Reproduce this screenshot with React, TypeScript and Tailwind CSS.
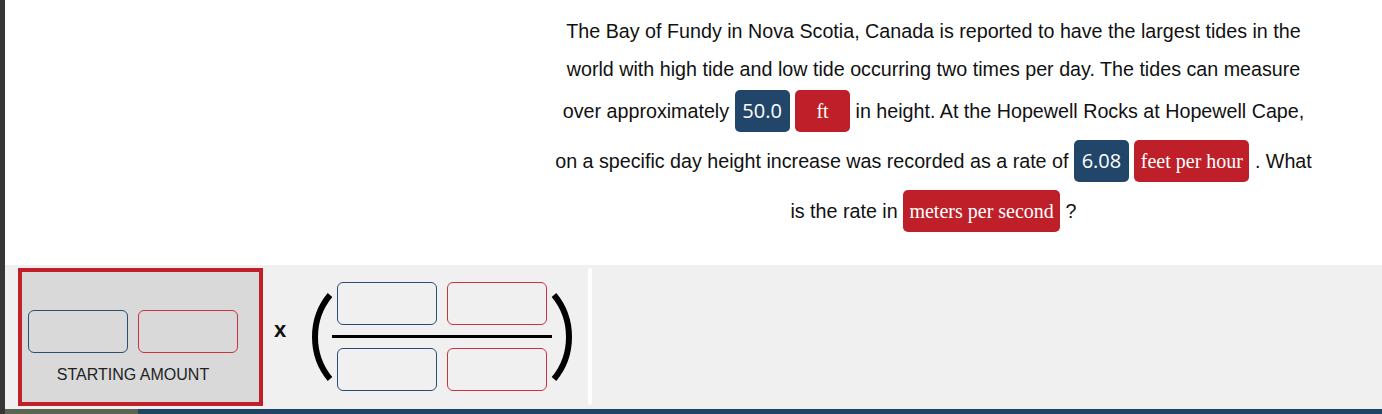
import React from 'react';

const Num = ({ value }: { value: string }) => (
  <span className="mb-[6px] mt-[2px] inline-block h-[42px] w-[55px] rounded-[5px] bg-[#22466a] text-center align-middle font-['Open_Sans',sans-serif] text-[20px] leading-[42px] text-white">
    {value}
  </span>
);

const Unit = ({ label, width }: { label: string; width: string }) => (
  <span
    className={`mb-[6px] mt-[2px] inline-block h-[42px] rounded-[5px] bg-[#be1f28] text-center align-middle font-['Liberation_Serif',serif] text-[20px] leading-[42px] text-white ${width}`}
  >
    {label}
  </span>
);

const Slot = ({ tone }: { tone: 'blue' | 'red' }) => (
  <div
    className={`h-[43px] w-[100px] rounded-[6px] border ${
      tone === 'blue' ? 'border-[#2b4c73]' : 'border-[#c8353c]'
    }`}
  />
);

const Paren = ({ side }: { side: 'left' | 'right' }) => (
  <svg width="22" height="88" viewBox="0 0 22 88" className="mt-[28px] shrink-0">
    <path
      d={side === 'left' ? 'M19 2 C -1 26, -1 62, 19 86' : 'M3 2 C 23 26, 23 62, 3 86'}
      fill="none"
      stroke="#000"
      strokeWidth="6"
    />
  </svg>
);

export default function App() {
  return (
    <div className="flex h-[414px] w-[1382px] overflow-hidden bg-white font-['Liberation_Sans',Arial,sans-serif] text-[#111]">
      {/* left rail */}
      <div className="w-[5px] shrink-0 bg-[#363636]" />

      <div className="flex flex-1 flex-col">
        {/* Question text */}
        <div className="h-[265px]">
          <p className="ml-[546px] w-[765px] pt-[12px] text-center text-[19.7px] leading-[38px]">
            The Bay of Fundy in Nova Scotia, Canada is reported to have the largest tides in the world
            with high tide and low tide occurring two times per day. The tides can measure over
            approximately <Num value="50.0" /> <Unit label="ft" width="w-[55px]" /> in height. At the
            Hopewell Rocks at Hopewell Cape, on a specific day height increase was recorded as a rate
            of <Num value="6.08" /> <Unit label="feet per hour" width="w-[115px]" /> . What is the rate
            in <Unit label="meters per second" width="w-[157px]" /> ?
          </p>
        </div>

        {/* Conversion workspace */}
        <div className="flex h-[144px] items-start bg-[#f0f0f0]">
          <div className="ml-[13px] mt-[3px] h-[138px] w-[245px] shrink-0 border-4 border-[#c0202a] bg-[#d9d9d9] pl-[6px] pt-[38px]">
            <div className="w-[210px]">
              <div className="flex gap-[10px]">
                <Slot tone="blue" />
                <Slot tone="red" />
              </div>
              <div className="mt-[13px] text-center text-[16px] leading-[18px] text-[#222]">
                STARTING AMOUNT
              </div>
            </div>
          </div>

          <div className="ml-[11px] mt-[54px] text-[22px] font-bold leading-[22px]">x</div>

          <div className="ml-[25px] flex items-start">
            <Paren side="left" />
            <div className="-ml-[1px] mt-[17px] w-[220px] px-[5px]">
              <div className="flex gap-[10px]">
                <Slot tone="blue" />
                <Slot tone="red" />
              </div>
              <div className="-mx-[5px] my-[10px] h-[3px] bg-black" />
              <div className="flex gap-[10px]">
                <Slot tone="blue" />
                <Slot tone="red" />
              </div>
            </div>
            <div className="-ml-[1px]">
              <Paren side="right" />
            </div>
          </div>

          <div className="ml-[15px] mt-[3px] h-[137px] w-[4px] rounded-[2px] bg-white" />
        </div>

        {/* bottom strip */}
        <div className="flex h-[5px]">
          <div className="w-[133px] bg-[#5a6652]" />
          <div className="flex-1 bg-[#1f4566]" />
        </div>
      </div>
    </div>
  );
}
